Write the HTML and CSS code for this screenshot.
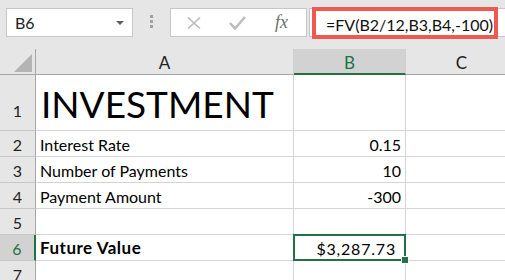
FILE: index.html
```html
<!DOCTYPE html>
<html lang="en">
<head>
  <meta charset="UTF-8" />
  <title>Future Value</title>
  <link rel="stylesheet" href="styles.css">
</head>
<body>
  <div class="toolbar">
    <div class="namebox">
      <span class="name">B6</span>
      <span class="caret"></span>
    </div>
    <div class="grip"><i></i><i></i><i></i></div>
    <div class="fbtns">
      <svg class="ico" width="14" height="12" viewBox="0 0 14 12">
        <path d="M1 0.5 L13 11.5 M13 0.5 L1 11.5" stroke="#bdbdbd" stroke-width="1.6" fill="none"/>
      </svg>
      <svg class="ico check" width="17" height="14" viewBox="0 0 17 14">
        <path d="M1 7 L6 12.5 L16 1" stroke="#bdbdbd" stroke-width="2.6" fill="none"/>
      </svg>
      <span class="fx">fx</span>
    </div>
    <div class="finput">
      <span class="formula">=FV(B2/12,B3,B4,-100)</span>
    </div>
  </div>

  <div class="sheet">
    <div class="corner"><span class="tri"></span></div>
    <div class="colhead">A</div>
    <div class="colhead active">B</div>
    <div class="colhead">C</div>

    <div class="rowhead big">1</div>
    <div class="cell title">INVESTMENT</div>
    <div class="cell"></div>
    <div class="cell"></div>

    <div class="rowhead">2</div>
    <div class="cell">Interest Rate</div>
    <div class="cell num">0.15</div>
    <div class="cell"></div>

    <div class="rowhead">3</div>
    <div class="cell">Number of Payments</div>
    <div class="cell num">10</div>
    <div class="cell"></div>

    <div class="rowhead">4</div>
    <div class="cell">Payment Amount</div>
    <div class="cell num">-300</div>
    <div class="cell"></div>

    <div class="rowhead">5</div>
    <div class="cell"></div>
    <div class="cell"></div>
    <div class="cell"></div>

    <div class="rowhead active">6</div>
    <div class="cell bold">Future Value</div>
    <div class="cell num money selected">$3,287.73</div>
    <div class="cell"></div>

    <div class="rowhead">7</div>
    <div class="cell"></div>
    <div class="cell"></div>
    <div class="cell"></div>
  </div>
</body>
</html>
```

FILE: styles.css
```css
* {
  box-sizing: border-box;
}
body {
  margin: 0;
  width: 505px;
  height: 280px;
  overflow: hidden;
  background-color: #fff;
  font-family: Lato, 'Liberation Sans', sans-serif;
  font-size: 16px;
  color: #000;
}
.toolbar {
  display: flex;
  align-items: flex-start;
  height: 49px;
  padding: 8px 0 0 6px;
  background-color: #e6e6e6;
}
.namebox {
  display: flex;
  align-items: center;
  justify-content: space-between;
  width: 127px;
  height: 29px;
  padding: 0 8px 0 8px;
  background-color: #fff;
  border: 1px solid #c6c6c6;
  color: #222;
}
.caret {
  width: 0;
  height: 0;
  border-left: 4px solid transparent;
  border-right: 4px solid transparent;
  border-top: 4px solid #606060;
}
.grip {
  display: flex;
  flex-direction: column;
  gap: 2px;
  width: 37px;
  height: 29px;
  padding: 7px 0 0 17px;
}
.grip i {
  display: block;
  width: 3px;
  height: 3px;
  background-color: #a0a0a0;
}
.fbtns {
  display: flex;
  align-items: center;
  width: 137px;
  height: 29px;
  padding-left: 16px;
  background-color: #fff;
  border: 1px solid #c6c6c6;
}
.ico.check {
  margin-left: 28px;
}
.fx {
  margin-left: 29px;
  font-family: 'Liberation Serif', serif;
  font-style: italic;
  font-size: 18px;
  color: #6e6e6e;
}
.finput {
  flex: 1;
  height: 29px;
  margin-left: 2px;
  padding-left: 2px;
  background-color: #fff;
  border: 1px solid #c6c6c6;
  border-right: none;
}
.formula {
  display: inline-block;
  width: 186px;
  height: 32px;
  margin-top: -2px;
  padding: 4px 0 0 10px;
  border: 4px solid #ef5a50;
  color: #111;
  white-space: nowrap;
}
.sheet {
  display: grid;
  grid-template-columns: 36px 258px 112px 112px;
  grid-template-rows: 26px 56px repeat(6, 26px);
}
.corner {
  position: relative;
  background-color: #e6e6e6;
  border-right: 1px solid #a6a6a6;
  border-bottom: 1px solid #a6a6a6;
}
.tri {
  position: absolute;
  right: 3px;
  bottom: 2px;
  width: 0;
  height: 0;
  border-left: 18px solid transparent;
  border-bottom: 18px solid #b4b4b4;
}
.colhead {
  display: flex;
  align-items: center;
  justify-content: center;
  padding-top: 2px;
  background-color: #e6e6e6;
  border-right: 1px solid #d0d0d0;
  border-bottom: 1px solid #a6a6a6;
  color: #222;
  font-size: 17px;
}
.colhead.active {
  background-color: #d2d2d2;
  border-bottom: 2px solid #217346;
  color: #217346;
}
.rowhead {
  display: flex;
  align-items: flex-end;
  justify-content: center;
  padding-bottom: 2px;
  background-color: #e6e6e6;
  border-right: 1px solid #a6a6a6;
  border-bottom: 1px solid #c8c8c8;
  color: #222;
}
.rowhead.big {
  padding-bottom: 10px;
}
.rowhead.active {
  background-color: #d2d2d2;
  border-right: 2px solid #217346;
  color: #217346;
}
.cell {
  display: flex;
  align-items: flex-end;
  padding: 0 4px 2px 4px;
  border-right: 1px solid #d4d4d4;
  border-bottom: 1px solid #d4d4d4;
  white-space: nowrap;
}
.cell.title {
  padding-left: 5px;
  padding-bottom: 4px;
  font-size: 37px;
}
.cell.num {
  justify-content: flex-end;
}
.cell.money {
  padding-right: 9px;
  letter-spacing: 0.8px;
}
.cell.bold {
  font-weight: bold;
  font-size: 17px;
  letter-spacing: 0.5px;
}
.cell.selected {
  position: relative;
}
.cell.selected::after {
  content: "";
  position: absolute;
  top: -1px;
  left: -1px;
  right: -1px;
  bottom: -1px;
  border: 2px solid #217346;
}
.cell.selected::before {
  content: "";
  position: absolute;
  right: -4px;
  bottom: -4px;
  z-index: 1;
  width: 6px;
  height: 6px;
  background-color: #217346;
  border: 1px solid #fff;
}
```
